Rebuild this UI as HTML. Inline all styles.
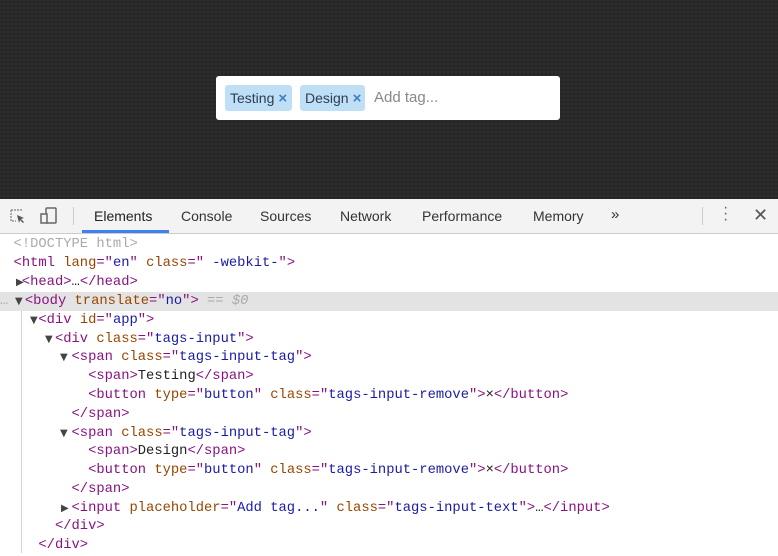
<!DOCTYPE html>
<html><head><style>
body{margin:0;width:778px;height:553px;overflow:hidden;font-family:"Liberation Sans",sans-serif;background:#fff;position:relative}
.top{position:absolute;left:0;top:0;width:778px;height:199px;background:#2b2b2b;background-image:radial-gradient(#222 1px,transparent 1.2px);background-size:4px 4px}
.box{position:absolute;left:216px;top:76px;width:344px;height:44px;background:#fff;border-radius:3px}
.tag{position:absolute;top:9px;height:26px;background:#bfdff7;border-radius:3px;font-size:14px;line-height:26px;color:#2c3e50;padding-left:5px;box-sizing:border-box;white-space:nowrap}
.tag b{color:#3a7fc1;font-weight:bold;font-size:15px;margin-left:4px}
.ph{position:absolute;left:158px;top:9px;line-height:26px;font-size:15px;color:#888}
.tb{position:absolute;left:0;top:199px;width:778px;height:34px;background:#f3f3f3;border-bottom:1px solid #ccc;font-size:14px;color:#333}
.tb span{position:absolute;top:9px}
.ln{position:absolute;left:-3px;width:778px;height:19px;font-family:"Liberation Mono",monospace;font-size:13.8px;line-height:20px;white-space:pre;color:#222}
.t{color:#881280}.a{color:#994500}.v{color:#1a1aa6}.g{color:#aaa}
.tri{position:absolute;font-size:10px;color:#444;font-family:"DejaVu Sans",sans-serif}
</style></head><body>
<div class="top"><div class="box">
<div class="tag" style="left:9px;width:67px">Testing<b>×</b></div>
<div class="tag" style="left:84px;width:65px">Design<b>×</b></div>
<div class="ph">Add tag...</div>
</div></div>
<div class="tb">
<svg style="position:absolute;left:9px;top:9px" width="18" height="18"><path d="M2 2h11M2 2v11h5" stroke="#666" fill="none" stroke-dasharray="2 1"/><path d="M8 7l7 3-3 1 3 3-1 1-3-3-1 3z" fill="#555"/></svg>
<svg style="position:absolute;left:40px;top:8px" width="20" height="18"><rect x="6" y="1" width="10" height="15" rx="1" stroke="#666" fill="none" stroke-width="1.5"/><rect x="1" y="7" width="6" height="9" stroke="#666" fill="#f3f3f3" stroke-width="1.5"/></svg>
<div style="position:absolute;left:73px;top:8px;width:1px;height:18px;background:#ccc"></div>
<span style="left:94px;color:#222">Elements</span>
<div style="position:absolute;left:82px;top:31px;width:87px;height:3px;background:#3b82f0"></div>
<span style="left:181px">Console</span><span style="left:260px">Sources</span><span style="left:340px">Network</span><span style="left:422px">Performance</span><span style="left:533px">Memory</span><span style="left:611px;top:7px;font-size:15px">»</span>
<div style="position:absolute;left:702px;top:8px;width:1px;height:18px;background:#ccc"></div>
<span style="left:723px;top:6px;font-size:16px;line-height:6px;color:#666">·<br>·<br>·</span>
<span style="left:753px;top:6px;font-size:18px;color:#555">✕</span>
</div>
<div style="position:absolute;left:0;top:292px;width:778px;height:19px;background:#e3e3e3"></div>
<div style="position:absolute;left:21px;top:311px;width:1px;height:242px;background:#c8d8f0"></div>
<div class="ln" style="top:235px"><span class="g">  &lt;!DOCTYPE html&gt;</span></div>
<div class="ln" style="top:254px"> <span class="t"> &lt;html</span> <span class="a">lang</span><span class="t">="</span><span class="v">en</span><span class="t">"</span> <span class="a">class</span><span class="t">="</span><span class="v"> -webkit-</span><span class="t">"&gt;</span></div>
<div class="ln" style="top:273px">   <span class="t">&lt;head&gt;</span>…<span class="t">&lt;/head&gt;</span></div>
<div class="tri" style="left:16px;top:277px">▶</div>
<div class="ln" style="top:292px;left:0"><span class="g">…</span>  <span class="t">&lt;body</span> <span class="a">translate</span><span class="t">="</span><span class="v">no</span><span class="t">"&gt;</span> <span class="g">== <i>$0</i></span></div>
<div class="tri" style="left:15px;top:296px">▼</div>
<div class="ln" style="top:311px">     <span class="t">&lt;div</span> <span class="a">id</span><span class="t">="</span><span class="v">app</span><span class="t">"&gt;</span></div>
<div class="tri" style="left:30px;top:315px">▼</div>
<div class="ln" style="top:330px">       <span class="t">&lt;div</span> <span class="a">class</span><span class="t">="</span><span class="v">tags-input</span><span class="t">"&gt;</span></div>
<div class="tri" style="left:45px;top:334px">▼</div>
<div class="ln" style="top:348px">         <span class="t">&lt;span</span> <span class="a">class</span><span class="t">="</span><span class="v">tags-input-tag</span><span class="t">"&gt;</span></div>
<div class="tri" style="left:60px;top:352px">▼</div>
<div class="ln" style="top:367px">           <span class="t">&lt;span&gt;</span>Testing<span class="t">&lt;/span&gt;</span></div>
<div class="ln" style="top:386px">           <span class="t">&lt;button</span> <span class="a">type</span><span class="t">="</span><span class="v">button</span><span class="t">"</span> <span class="a">class</span><span class="t">="</span><span class="v">tags-input-remove</span><span class="t">"&gt;</span>×<span class="t">&lt;/button&gt;</span></div>
<div class="ln" style="top:405px">         <span class="t">&lt;/span&gt;</span></div>
<div class="ln" style="top:424px">         <span class="t">&lt;span</span> <span class="a">class</span><span class="t">="</span><span class="v">tags-input-tag</span><span class="t">"&gt;</span></div>
<div class="tri" style="left:60px;top:428px">▼</div>
<div class="ln" style="top:442px">           <span class="t">&lt;span&gt;</span>Design<span class="t">&lt;/span&gt;</span></div>
<div class="ln" style="top:461px">           <span class="t">&lt;button</span> <span class="a">type</span><span class="t">="</span><span class="v">button</span><span class="t">"</span> <span class="a">class</span><span class="t">="</span><span class="v">tags-input-remove</span><span class="t">"&gt;</span>×<span class="t">&lt;/button&gt;</span></div>
<div class="ln" style="top:480px">         <span class="t">&lt;/span&gt;</span></div>
<div class="ln" style="top:499px">         <span class="t">&lt;input</span> <span class="a">placeholder</span><span class="t">="</span><span class="v">Add tag...</span><span class="t">"</span> <span class="a">class</span><span class="t">="</span><span class="v">tags-input-text</span><span class="t">"&gt;</span>…<span class="t">&lt;/input&gt;</span></div>
<div class="tri" style="left:61px;top:503px">▶</div>
<div class="ln" style="top:517px">       <span class="t">&lt;/div&gt;</span></div>
<div class="ln" style="top:536px">     <span class="t">&lt;/div&gt;</span></div>
</body></html>
